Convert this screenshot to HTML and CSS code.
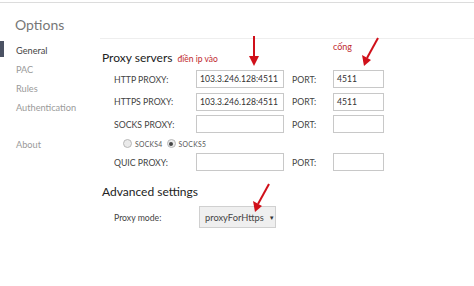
FILE: index.html
```html
<!DOCTYPE html>
<html>
<head>
<meta charset="utf-8">
<link rel="stylesheet" href="styles.css">
</head>
<body>
<div class="frame">
  <aside class="sidebar">
    <h1 class="title">Options</h1>
    <nav class="nav">
      <a class="nav-item active">General</a>
      <a class="nav-item">PAC</a>
      <a class="nav-item">Rules</a>
      <a class="nav-item">Authentication</a>
      <a class="nav-item about">About</a>
    </nav>
  </aside>
  <main class="main">
    <section class="section">
      <div class="section-head">
        <h2 class="section-title">Proxy servers</h2>
        <span class="note">điền ip vào</span>
      </div>
      <div class="row">
        <span class="label">HTTP PROXY:</span>
        <span class="input host">103.3.246.128:4511</span>
        <span class="port-label">PORT:</span>
        <span class="input port">4511</span>
      </div>
      <div class="row">
        <span class="label">HTTPS PROXY:</span>
        <span class="input host">103.3.246.128:4511</span>
        <span class="port-label">PORT:</span>
        <span class="input port">4511</span>
      </div>
      <div class="row">
        <span class="label">SOCKS PROXY:</span>
        <span class="input host"></span>
        <span class="port-label">PORT:</span>
        <span class="input port"></span>
      </div>
      <div class="radios">
        <span class="radio"></span><span class="radio-label">SOCKS4</span>
        <span class="radio checked"></span><span class="radio-label">SOCKS5</span>
      </div>
      <div class="row">
        <span class="label">QUIC PROXY:</span>
        <span class="input host"></span>
        <span class="port-label">PORT:</span>
        <span class="input port"></span>
      </div>
    </section>
    <section class="section adv">
      <h2 class="section-title">Advanced settings</h2>
      <div class="row mode-row">
        <span class="label mode-label">Proxy mode:</span>
        <span class="select">proxyForHttps <span class="caret">&#9660;</span></span>
      </div>
    </section>
  </main>
  <span class="cong">cống</span>
  <svg class="arrows" width="474" height="286" viewBox="0 0 474 286">
    <g stroke="#d0101a" stroke-width="2" fill="#d0101a">
      <line x1="254" y1="36" x2="254" y2="58"/>
      <polygon points="249,56 259,56 254,66" stroke="none"/>
      <line x1="378" y1="38" x2="367" y2="58"/>
      <polygon points="362,55 371,60 364,66" stroke="none"/>
      <line x1="269" y1="184" x2="258" y2="204"/>
      <polygon points="253,201 262,206 255,212" stroke="none"/>
    </g>
  </svg>
</div>
</body>
</html>
```
FILE: styles.css
```css
html, body {
  margin: 0;
  padding: 0;
  background: #fff;
}
.frame {
  position: relative;
  width: 474px;
  height: 286px;
  border-top: 1px solid #dcdcdc;
  margin-top: 2px;
  display: flex;
  font-family: Lato, "Noto Sans", sans-serif;
  color: #333;
  overflow: hidden;
}
.sidebar {
  width: 100px;
  flex: none;
}
.title {
  margin: 13px 0 0 15px;
  font-size: 14px;
  font-weight: normal;
  color: #777;
  line-height: 18px;
}
.nav {
  display: flex;
  flex-direction: column;
  margin-top: 7px;
}
.nav-item {
  display: block;
  height: 19px;
  line-height: 19px;
  padding-left: 16px;
  font-size: 9.2px;
  color: #9a9a9a;
}
.nav-item.active {
  color: #444;
  border-left: 4px solid #4b5263;
  padding-left: 12px;
  height: 16px;
  line-height: 20px;
  margin-bottom: 3px;
}
.nav-item.about {
  margin-top: 18px;
}
.main {
  flex: 1;
  margin-top: 35px;
  border-top: 1px solid #eeeeee;
  padding-left: 2px;
}
.section-head {
  display: flex;
  align-items: baseline;
  gap: 5px;
  margin-top: 10px;
}
.section-title {
  margin: 0;
  font-size: 12px;
  font-weight: normal;
  color: #222;
  line-height: 18px;
}
.note {
  font-size: 8.5px;
  color: #c0282e;
}
.row {
  display: flex;
  align-items: center;
  height: 18px;
  margin-top: 4.5px;
  padding-left: 12px;
  font-size: 8.7px;
  color: #444;
}
.section-head + .row {
  margin-top: 3px;
}
.label {
  width: 82px;
  flex: none;
}
.input {
  box-sizing: border-box;
  height: 18px;
  border: 1px solid #c8c8c8;
  line-height: 16px;
  padding-left: 3px;
  font-size: 8.6px;
  color: #333;
  flex: none;
  white-space: nowrap;
  overflow: hidden;
}
.input.host {
  width: 88px;
}
.port-label {
  width: 49px;
  padding-left: 8px;
  box-sizing: border-box;
  flex: none;
}
.input.port {
  width: 51px;
}
.radios {
  display: flex;
  align-items: center;
  height: 13px;
  margin-top: 4px;
  padding-left: 21px;
  font-size: 6.8px;
  color: #555;
}
.radio {
  box-sizing: border-box;
  width: 9px;
  height: 9px;
  border-radius: 50%;
  border: 1px solid #b8b8b8;
  background: #eaeaea;
  margin-right: 3px;
  position: relative;
}
.radio.checked::after {
  content: "";
  position: absolute;
  left: 1.5px;
  top: 1.5px;
  width: 4px;
  height: 4px;
  border-radius: 50%;
  background: #444;
}
.radio-label {
  margin-right: 4px;
  letter-spacing: 0.3px;
}
.radios + .row {
  margin-top: 3px;
}
.adv {
  margin-top: 12px;
}
.mode-row {
  height: 22px;
  margin-top: 5px;
}
.mode-label {
  width: 85px;
}
.select {
  box-sizing: border-box;
  height: 22px;
  width: 77px;
  display: flex;
  align-items: center;
  padding-left: 5px;
  border: 1px solid #d0d0d0;
  background: #efefef;
  color: #444;
  font-size: 9.3px;
  white-space: nowrap;
}
.caret {
  font-size: 6px;
  margin-left: 5px;
  color: #333;
}
.cong {
  position: absolute;
  left: 333px;
  top: 38px;
  font-size: 9px;
  color: #c0282e;
}
.arrows {
  position: absolute;
  left: 0;
  top: -3px;
  pointer-events: none;
}
```
